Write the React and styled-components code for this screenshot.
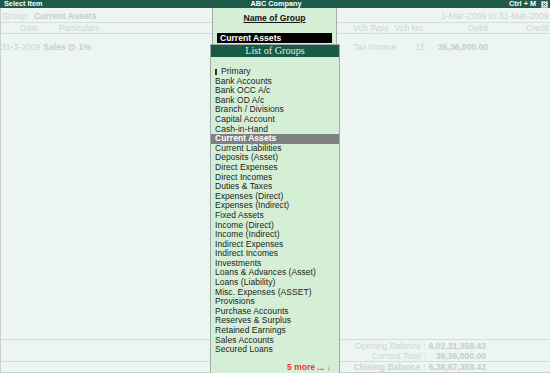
import React from 'react';
import styled, { createGlobalStyle } from 'styled-components';

const groups = [
  'Bank Accounts',
  'Bank OCC A/c',
  'Bank OD A/c',
  'Branch / Divisions',
  'Capital Account',
  'Cash-in-Hand',
  'Current Assets',
  'Current Liabilities',
  'Deposits (Asset)',
  'Direct Expenses',
  'Direct Incomes',
  'Duties & Taxes',
  'Expenses (Direct)',
  'Expenses (Indirect)',
  'Fixed Assets',
  'Income (Direct)',
  'Income (Indirect)',
  'Indirect Expenses',
  'Indirect Incomes',
  'Investments',
  'Loans & Advances (Asset)',
  'Loans (Liability)',
  'Misc. Expenses (ASSET)',
  'Provisions',
  'Purchase Accounts',
  'Reserves & Surplus',
  'Retained Earnings',
  'Sales Accounts',
  'Secured Loans',
];

const Global = createGlobalStyle`
  html, body {
    margin: 0;
    padding: 0;
    background: #edf5f3;
  }
  body {
    width: 550px;
    height: 373px;
    overflow: hidden;
    font-family: "Liberation Sans", Arial, sans-serif;
  }
`;

const Screen = styled.div`
  position: relative;
  width: 550px;
  height: 373px;
  display: flex;
  flex-direction: column;
  background: #edf5f3;
  overflow: hidden;
`;

const TitleBar = styled.div`
  height: 8px;
  flex: none;
  display: grid;
  grid-template-columns: 1fr auto 1fr;
  align-items: center;
  padding: 0 2px 0 4px;
  background: #1d5a4a;
  color: #fff;
  font-size: 7.3px;
  font-weight: bold;
  line-height: 8px;
  white-space: nowrap;
`;

const TitleRight = styled.div`
  display: flex;
  justify-content: flex-end;
  align-items: center;
  gap: 5px;
`;

const Main = styled.div`
  flex: 1;
  display: flex;
  flex-direction: column;
  border-left: 1px solid #c9d0cd;
  border-bottom: 1px solid #c9d0cd;
  color: #cbd5d2;
  font-size: 8.6px;
`;

const InfoRow = styled.div`
  height: 13px;
  display: flex;
  justify-content: space-between;
  align-items: center;
  padding: 1px 1px 0 1px;
  border-bottom: 1px solid #d5dcda;
  font-size: 8.8px;
`;

const Strong = styled.b`
  margin-left: 5px;
  color: #c3cecb;
`;

const Cols = styled.div`
  display: grid;
  grid-template-columns: 41px 1fr 41px 31px 63px 61px;
  padding-right: 1px;
  height: ${p => p.$h}px;
  align-items: center;
  border-bottom: ${p => (p.$line ? '1px solid #d5dcda' : 'none')};
  margin-top: ${p => p.$top || 0}px;
`;

const Cell = styled.span`
  text-align: ${p => p.$align || 'left'};
  padding-left: ${p => p.$pad || 0}px;
  font-weight: ${p => (p.$bold ? 'bold' : 'normal')};
  color: ${p => (p.$bold ? '#c3cecb' : 'inherit')};
  white-space: nowrap;
`;

const Body = styled.div`
  flex: 1;
`;

const Footer = styled.div`
  border-top: 1px solid #d5dcda;
`;

const Totals = styled.div`
  padding: 2px 0 1px;
  border-bottom: ${p => (p.$line ? '1px solid #d5dcda' : 'none')};
`;

const TotalRow = styled.div`
  display: flex;
  justify-content: flex-end;
  padding-right: 64px;
  height: ${p => p.$h || 9}px;
  line-height: ${p => p.$h || 9}px;
  font-weight: ${p => (p.$bold ? 'bold' : 'normal')};
  white-space: nowrap;
`;

const TotalValue = styled.span`
  width: 58px;
  text-align: right;
  font-weight: bold;
  color: #c3cecb;
`;

const Popup = styled.div`
  position: absolute;
  left: 210px;
  top: 8px;
  bottom: 0;
  width: 130px;
  display: flex;
  flex-direction: column;
`;

const NamePanel = styled.div`
  margin: 0 3px 0 2px;
  height: 36px;
  flex: none;
  background: #d5efd6;
  border-left: 1px solid #a3aba7;
  border-right: 1px solid #a3aba7;
  padding-top: 5px;
  box-sizing: border-box;
`;

const NameTitle = styled.div`
  text-align: center;
  font-size: 8.6px;
  line-height: 10px;
  font-weight: bold;
  text-decoration: underline;
  color: #111;
`;

const NameInput = styled.div`
  margin: 10px 4px 0 4px;
  height: 10px;
  background: #000;
  color: #fff;
  font-size: 8.6px;
  line-height: 10px;
  font-weight: bold;
  padding-left: 3px;
`;

const ListPanel = styled.div`
  flex: 1;
  display: flex;
  flex-direction: column;
  background: #d5efd6;
  border: 1px solid #a3aba7;
  border-bottom: none;
`;

const ListHeader = styled.div`
  height: 12px;
  background: #175a48;
  color: #e4ece8;
  text-align: center;
  font-family: "Liberation Serif", "Times New Roman", serif;
  font-size: 10.2px;
  line-height: 12px;
`;

const Items = styled.div`
  padding-top: 10px;
  display: flex;
  flex-direction: column;
`;

const Item = styled.div`
  height: 9.6px;
  line-height: 9.6px;
  padding-left: 4px;
  font-size: 8.5px;
  letter-spacing: 0.05px;
  white-space: nowrap;
  color: ${p => (p.$active ? '#fff' : '#1c1c1c')};
  background: ${p => (p.$active ? '#808080' : 'transparent')};
  font-weight: ${p => (p.$active ? 'bold' : 'normal')};
  display: flex;
  align-items: center;
`;

const Bullet = styled.span`
  width: 2px;
  height: 6px;
  background: #333;
  margin-right: 4px;
`;

const More = styled.div`
  margin-top: 7px;
  padding-right: 8px;
  text-align: right;
  color: #e83a3a;
  font-size: 8.5px;
  line-height: 10px;
  font-weight: bold;
  white-space: nowrap;
`;

const CloseIcon = () => (
  <svg width="7" height="7" viewBox="0 0 7 7">
    <rect x="0.5" y="0.5" width="6" height="6" fill="#dfe6e3" stroke="#aab4b0" />
    <path d="M2 2L5 5M5 2L2 5" stroke="#55605c" strokeWidth="1" />
  </svg>
);

export default function App() {
  return (
    <Screen>
      <Global />
      <TitleBar>
        <span>Select Item</span>
        <span>ABC Company</span>
        <TitleRight>
          <span>Ctrl + M</span>
          <CloseIcon />
        </TitleRight>
      </TitleBar>
      <Main>
        <InfoRow>
          <span>
            Group:<Strong>Current Assets</Strong>
          </span>
          <span>1-Mar-2009 to 31-Mar-2009</span>
        </InfoRow>
        <Cols $h={10} $line>
          <Cell $pad={19}>Date</Cell>
          <Cell $pad={17}>Particulars</Cell>
          <Cell>Vch Type</Cell>
          <Cell $align="right">Vch No.</Cell>
          <Cell $align="right">Debit</Cell>
          <Cell $align="right">Credit</Cell>
        </Cols>
        <Body>
          <Cols $h={10} $top={8}>
            <Cell>31-3-2009</Cell>
            <Cell $bold $pad={1}>Sales @ 1%</Cell>
            <Cell>Tax Invoice</Cell>
            <Cell $align="right">15</Cell>
            <Cell $align="right" $bold>36,36,000.00</Cell>
            <Cell />
          </Cols>
        </Body>
        <Footer>
          <Totals $line>
            <TotalRow $h={9.5}>
              Opening Balance :&nbsp;<TotalValue>6,02,31,358.43</TotalValue>
            </TotalRow>
            <TotalRow $h={8.5}>
              Current Total :&nbsp;<TotalValue>36,36,000.00</TotalValue>
            </TotalRow>
          </Totals>
          <TotalRow $h={10} $bold>
            Closing Balance :&nbsp;<TotalValue>6,38,67,358.43</TotalValue>
          </TotalRow>
        </Footer>
      </Main>
      <Popup>
        <NamePanel>
          <NameTitle>Name of Group</NameTitle>
          <NameInput>Current Assets</NameInput>
        </NamePanel>
        <ListPanel>
          <ListHeader>List of Groups</ListHeader>
          <Items>
            <Item>
              <Bullet />
              Primary
            </Item>
            {groups.map(g => (
              <Item key={g} $active={g === 'Current Assets'}>
                {g}
              </Item>
            ))}
          </Items>
          <More>5 more ... ↓</More>
        </ListPanel>
      </Popup>
    </Screen>
  );
}
